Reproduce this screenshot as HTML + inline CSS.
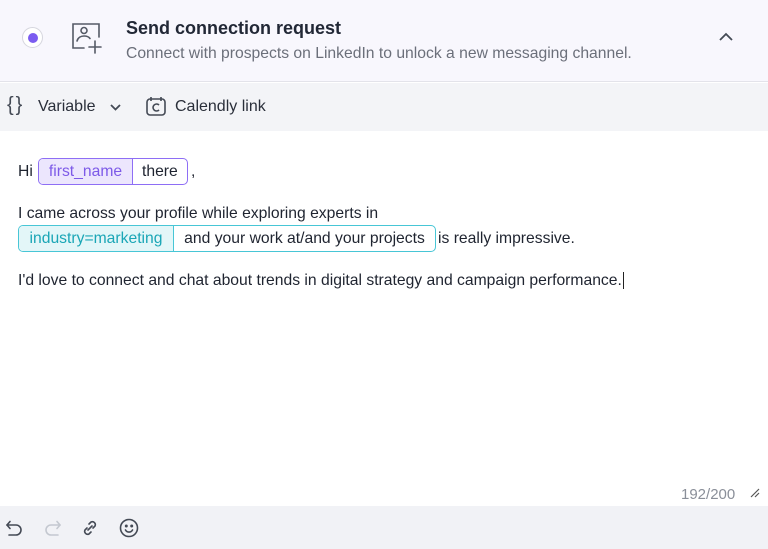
<!DOCTYPE html>
<html><head><meta charset="utf-8"><style>
*{margin:0;padding:0;box-sizing:border-box}
body{width:768px;height:549px;overflow:hidden;font-family:"Liberation Sans",sans-serif;background:#fff;position:relative;color:#1f2430}
.hdr{position:absolute;left:0;top:0;width:768px;height:82px;background:#f8f7fd;border-bottom:1px solid #e3e3ea}
.tb{position:absolute;left:0;top:83px;width:768px;height:48px;background:#f3f4f7}
.bb{position:absolute;left:0;top:506px;width:768px;height:43px;background:#f1f2f6}
.abs{position:absolute}
.t1{left:126px;top:18px;font-size:18px;font-weight:bold;color:#222836}
.t2{left:126px;top:45px;font-size:15.7px;color:#6b6f7a}
.txt{font-size:15.7px;color:#1f2430;white-space:nowrap}
.tok{position:absolute;height:27px;border-radius:5px;display:flex;font-size:15.7px;overflow:hidden}
.tok span{display:flex;align-items:center;padding:0 9px;white-space:nowrap}
</style></head><body>
<div class="hdr">
 <div class="abs" style="left:22px;top:27px;width:21px;height:21px;border-radius:50%;border:1px solid #d6d6de;background:#fff"></div>
 <div class="abs" style="left:28px;top:33px;width:10px;height:10px;border-radius:50%;background:#7b5cf0"></div>
 <svg class="abs" style="left:68px;top:20px" width="36" height="36" viewBox="0 0 36 36" fill="none" stroke="#555a66" stroke-width="1.6" stroke-linecap="round">
  <path d="M16 28H5V4h26v13"/>
  <circle cx="16" cy="10.5" r="3"/>
  <path d="M9 21c1-3.5 4-5 7-5s5 1 6 2.5"/>
  <path d="M27 21v12M21 27h12"/>
 </svg>
 <div class="abs t1">Send connection request</div>
 <div class="abs t2">Connect with prospects on LinkedIn to unlock a new messaging channel.</div>
 <svg class="abs" style="left:718px;top:32px" width="16" height="10" viewBox="0 0 16 10" fill="none" stroke="#444a55" stroke-width="1.8"><path d="M2 8l6-6 6 6"/></svg>
</div>
<div class="tb">
 <div class="abs" style="left:7px;top:11px;font-size:20px;color:#444a55;letter-spacing:2px">{}</div>
 <div class="abs" style="left:38px;top:15px;font-size:16px;color:#2a2f3a">Variable</div>
 <svg class="abs" style="left:109px;top:20px" width="13" height="9" viewBox="0 0 13 9" fill="none" stroke="#444a55" stroke-width="1.8"><path d="M2 2l4.5 4.5L11 2"/></svg>
 <svg class="abs" style="left:145px;top:12px" width="22" height="22" viewBox="0 0 22 22" fill="none" stroke="#444a55" stroke-width="1.6"><rect x="2" y="4" width="18" height="16" rx="3"/><path d="M6 2v4M16 2v4"/><path d="M14 10a3.5 3.5 0 1 0 0 5"/></svg>
 <div class="abs" style="left:175px;top:15px;font-size:16px;color:#2a2f3a">Calendly link</div>
</div>
<div class="abs txt" style="left:18px;top:163px">Hi</div>
<div class="tok" style="left:38px;top:158px;border:1px solid #8e6ef5;background:#fff">
 <span style="background:#ece6fd;color:#7d5ae8;border-right:1px solid #8e6ef5;width:94px;justify-content:center">first_name</span>
 <span style="color:#1f2430">there</span>
</div>
<div class="abs txt" style="left:191px;top:163px">,</div>
<div class="abs txt" style="left:18px;top:205px">I came across your profile while exploring experts in</div>
<div class="tok" style="left:18px;top:225px;border:1px solid #48c6d6;background:#fff">
 <span style="background:#e3f6f8;color:#1aa6b6;border-right:1px solid #48c6d6;width:155px;justify-content:center">industry=marketing</span>
 <span style="color:#1f2430;width:261px;justify-content:center">and your work at/and your projects</span>
</div>
<div class="abs txt" style="left:438px;top:230px">is really impressive.</div>
<div class="abs txt" style="left:18px;top:272px">I'd love to connect and chat about trends in digital strategy and campaign performance.<span style="border-left:1px solid #222;margin-left:1px"></span></div>
<div class="abs" style="left:681px;top:486px;font-size:15px;color:#8a8f99">192/200</div>
<svg class="abs" style="left:749px;top:487px" width="12" height="12" viewBox="0 0 12 12" stroke="#555" stroke-width="1.2"><path d="M2 10L10 2M6 10l4-4"/></svg>
<div class="bb">
 <svg class="abs" style="left:4px;top:12px" width="20" height="20" viewBox="0 0 20 20" fill="none" stroke="#444a55" stroke-width="1.6" stroke-linecap="round"><path d="M3 7h9a5 5 0 0 1 0 10H5"/><path d="M6 3.5L3 7l3 3.5"/></svg>
 <svg class="abs" style="left:43px;top:12px" width="20" height="20" viewBox="0 0 20 20" fill="none" stroke="#c4c8d0" stroke-width="1.6" stroke-linecap="round"><path d="M17 7H8a5 5 0 0 0 0 10h7"/><path d="M14 3.5L17 7l-3 3.5"/></svg>
 <svg class="abs" style="left:81px;top:13px" width="18" height="18" viewBox="0 0 18 18" fill="none" stroke="#444a55" stroke-width="1.6" stroke-linecap="round"><path d="M8 5l2-2a3 3 0 0 1 4 4l-2 2"/><path d="M10 13l-2 2a3 3 0 0 1-4-4l2-2"/><path d="M7 11l4-4"/></svg>
 <svg class="abs" style="left:119px;top:12px" width="20" height="20" viewBox="0 0 20 20" fill="none" stroke="#444a55" stroke-width="1.6" stroke-linecap="round"><circle cx="10" cy="10" r="8.5"/><path d="M6.5 12a4 4 0 0 0 7 0"/><circle cx="7.3" cy="8" r=".7" fill="#444a55"/><circle cx="12.7" cy="8" r=".7" fill="#444a55"/></svg>
</div>
</body></html>
